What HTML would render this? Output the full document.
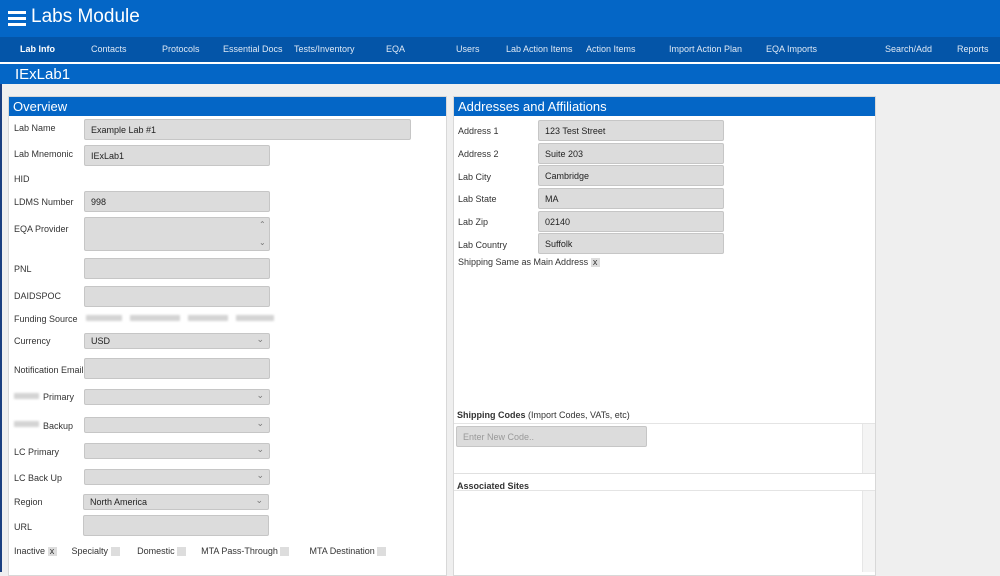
<!DOCTYPE html>
<html><head><style>
*{margin:0;padding:0;box-sizing:border-box}
body{width:1000px;height:572px;overflow:hidden;background:#efefef;font-family:"Liberation Sans",Arial,sans-serif;position:relative;font-size:9px;color:#222}
.a{position:absolute}
.hdr{left:0;top:0;width:1000px;height:37px;background:#0466c6}
.nav{left:0;top:37px;width:1000px;height:25px;background:#0455a8}
.nav span{position:absolute;top:7px;color:#dfe9f5;font-size:9px}
.bar{left:0;top:64px;width:1000px;height:20px;background:#0466c6;color:#fff;font-size:15px;padding:2px 0 0 15px}
.panel{background:#fff;border:1px solid #d8d8d8}
.ph{background:#0466c6;color:#fff;font-size:13px;height:19px;padding:2px 0 0 4px}
.lb{font-size:9px;color:#333}
.in{background:#dcdcdc;border:1px solid #c6c6c6;border-radius:2px;font-size:9px;color:#222;padding-left:6px;display:flex;align-items:center}
.sel::after{content:"⌄";position:absolute;right:5px;top:0px;font-size:9px;color:#777}
.cb{width:9px;height:9px;background:#ddd;display:inline-block;vertical-align:middle;font-size:9px;text-align:center;line-height:9px}
.blur{background:#d4d4d4;height:6px;filter:blur(1px)}
</style></head><body>
<div class="a" style="left:0;top:0;width:2px;height:572px;background:#1a3f80"></div>
<div class="a hdr"></div>
<div class="a" style="left:8px;top:11px;width:18px;height:3px;background:#fff"></div>
<div class="a" style="left:8px;top:17px;width:18px;height:3px;background:#fff"></div>
<div class="a" style="left:8px;top:23px;width:18px;height:3px;background:#fff"></div>
<div class="a" style="left:31px;top:6px;color:#fff;font-size:19px">Labs Module</div>
<div class="a nav">
<span style="left:20px;color:#fff;font-weight:bold">Lab Info</span>
<span style="left:91px">Contacts</span>
<span style="left:162px">Protocols</span>
<span style="left:223px">Essential Docs</span>
<span style="left:294px">Tests/Inventory</span>
<span style="left:386px">EQA</span>
<span style="left:456px">Users</span>
<span style="left:506px">Lab Action Items</span>
<span style="left:586px">Action Items</span>
<span style="left:669px">Import Action Plan</span>
<span style="left:766px">EQA Imports</span>
<span style="left:885px">Search/Add</span>
<span style="left:957px">Reports</span>
</div>
<div class="a" style="left:0;top:62px;width:1000px;height:2px;background:#fff"></div>
<div class="a bar">IExLab1</div>

<div class="a panel" style="left:8px;top:96px;width:439px;height:480px"><div class="ph">Overview</div></div>
<div class="a panel" style="left:453px;top:96px;width:423px;height:480px"><div class="ph">Addresses and Affiliations</div></div>

<div class="a lb" style="left:14px;top:123px">Lab Name</div>
<div class="a in" style="left:84px;top:119px;width:327px;height:21px">Example Lab #1</div>
<div class="a lb" style="left:14px;top:149px">Lab Mnemonic</div>
<div class="a in" style="left:84px;top:145px;width:186px;height:21px">IExLab1</div>
<div class="a lb" style="left:14px;top:174px">HID</div>
<div class="a lb" style="left:14px;top:197px">LDMS Number</div>
<div class="a in" style="left:84px;top:191px;width:186px;height:21px">998</div>
<div class="a lb" style="left:14px;top:224px">EQA Provider</div>
<div class="a in" style="left:84px;top:217px;width:186px;height:34px"></div>
<div class="a" style="left:259px;top:220px;font-size:8px;color:#777">⌃</div>
<div class="a" style="left:259px;top:238px;font-size:8px;color:#777">⌄</div>
<div class="a lb" style="left:14px;top:264px">PNL</div>
<div class="a in" style="left:84px;top:258px;width:186px;height:21px"></div>
<div class="a lb" style="left:14px;top:291px">DAIDSPOC</div>
<div class="a in" style="left:84px;top:286px;width:186px;height:21px"></div>
<div class="a lb" style="left:14px;top:314px">Funding Source</div>
<div class="a blur" style="left:86px;top:315px;width:36px"></div>
<div class="a blur" style="left:130px;top:315px;width:50px"></div>
<div class="a blur" style="left:188px;top:315px;width:40px"></div>
<div class="a blur" style="left:236px;top:315px;width:38px"></div>
<div class="a lb" style="left:14px;top:336px">Currency</div>
<div class="a in sel" style="left:84px;top:333px;width:186px;height:16px">USD</div>
<div class="a lb" style="left:14px;top:365px">Notification Email</div>
<div class="a in" style="left:84px;top:358px;width:186px;height:21px"></div>
<div class="a blur" style="left:14px;top:393px;width:25px"></div>
<div class="a lb" style="left:43px;top:392px">Primary</div>
<div class="a in sel" style="left:84px;top:389px;width:186px;height:16px"></div>
<div class="a blur" style="left:14px;top:421px;width:25px"></div>
<div class="a lb" style="left:43px;top:421px">Backup</div>
<div class="a in sel" style="left:84px;top:417px;width:186px;height:16px"></div>
<div class="a lb" style="left:14px;top:447px">LC Primary</div>
<div class="a in sel" style="left:84px;top:443px;width:186px;height:16px"></div>
<div class="a lb" style="left:14px;top:473px">LC Back Up</div>
<div class="a in sel" style="left:84px;top:469px;width:186px;height:16px"></div>
<div class="a lb" style="left:14px;top:497px">Region</div>
<div class="a in sel" style="left:83px;top:494px;width:186px;height:16px">North America</div>
<div class="a lb" style="left:14px;top:522px">URL</div>
<div class="a in" style="left:83px;top:515px;width:186px;height:21px"></div>
<div class="a lb" style="left:14px;top:546px;white-space:nowrap">Inactive <span class="cb">x</span>&nbsp;&nbsp;&nbsp;&nbsp;&nbsp; Specialty <span class="cb"></span>&nbsp;&nbsp;&nbsp;&nbsp;&nbsp;&nbsp; Domestic <span class="cb"></span>&nbsp;&nbsp;&nbsp;&nbsp;&nbsp; MTA Pass-Through <span class="cb"></span>&nbsp;&nbsp;&nbsp;&nbsp;&nbsp;&nbsp;&nbsp; MTA Destination <span class="cb"></span></div>

<div class="a lb" style="left:458px;top:126px">Address 1</div>
<div class="a in" style="left:538px;top:120px;width:186px;height:21px">123 Test Street</div>
<div class="a lb" style="left:458px;top:149px">Address 2</div>
<div class="a in" style="left:538px;top:143px;width:186px;height:21px">Suite 203</div>
<div class="a lb" style="left:458px;top:172px">Lab City</div>
<div class="a in" style="left:538px;top:165px;width:186px;height:21px">Cambridge</div>
<div class="a lb" style="left:458px;top:194px">Lab State</div>
<div class="a in" style="left:538px;top:188px;width:186px;height:21px">MA</div>
<div class="a lb" style="left:458px;top:217px">Lab Zip</div>
<div class="a in" style="left:538px;top:211px;width:186px;height:21px">02140</div>
<div class="a lb" style="left:458px;top:240px">Lab Country</div>
<div class="a in" style="left:538px;top:233px;width:186px;height:21px">Suffolk</div>
<div class="a lb" style="left:458px;top:257px">Shipping Same as Main Address <span class="cb">x</span></div>

<div class="a lb" style="left:457px;top:410px"><b>Shipping Codes</b> (Import Codes, VATs, etc)</div>
<div class="a" style="left:454px;top:423px;width:421px;height:1px;background:#e4e4e4"></div>
<div class="a in" style="left:456px;top:426px;width:191px;height:21px;color:#999">Enter New Code..</div>
<div class="a" style="left:454px;top:473px;width:421px;height:1px;background:#e0e0e0"></div>
<div class="a" style="left:862px;top:424px;width:13px;height:49px;background:#f4f4f4;border-left:1px solid #e6e6e6"></div>
<div class="a lb" style="left:457px;top:481px;font-weight:bold">Associated Sites</div>
<div class="a" style="left:454px;top:490px;width:421px;height:1px;background:#e4e4e4"></div>
<div class="a" style="left:862px;top:491px;width:13px;height:81px;background:#f4f4f4;border-left:1px solid #e6e6e6"></div>
</body></html>
